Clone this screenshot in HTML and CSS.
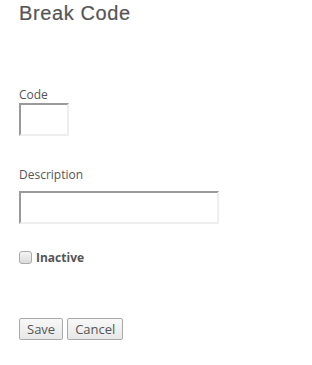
FILE: index.html
```
<!DOCTYPE html>
<html lang="en">
<head>
    <meta charset="UTF-8">
    <meta name="viewport" content="width=device-width, initial-scale=1.0">
    <title>Break Code</title>
    <link rel="stylesheet" href="styles.css">
</head>
<body>
    <div class="page">
        <h2 class="title">Break Code</h2>

        <div class="field field-code">
            <label class="field-label" for="code">Code</label>
            <input type="text" id="code" class="input input-code">
        </div>

        <div class="field field-desc">
            <label class="field-label" for="description">Description</label>
            <input type="text" id="description" class="input input-desc">
        </div>

        <div class="check-row">
            <input type="checkbox" id="inactive" class="check">
            <label for="inactive" class="check-label">Inactive</label>
        </div>

        <div class="button-row">
            <button class="btn">Save</button>
            <button class="btn">Cancel</button>
        </div>
    </div>
</body>
</html>
```

FILE: styles.css
```
* {
    margin: 0;
    padding: 0;
    box-sizing: border-box;
}

body {
    background-color: #fff;
    font-family: "Open Sans", sans-serif;
    font-size: 12px;
    color: #555;
}

.page {
    padding: 2px 19px;
}

.title {
    font-family: "Liberation Sans", Arial, sans-serif;
    font-size: 20px;
    font-weight: normal;
    letter-spacing: 0.6px;
    line-height: 22px;
    color: #555;
    -webkit-text-stroke: 0.2px #555;
}

.field {
    display: flex;
    flex-direction: column;
    align-items: flex-start;
}

.field-code {
    margin-top: 62px;
}

.field-desc {
    margin-top: 30px;
}

.field-label {
    line-height: 17px;
}

.field-desc .field-label {
    margin-bottom: 8px;
}

.input {
    border: 2px solid #999;
    border-right-color: #eee;
    border-bottom-color: #eee;
    background: #fff;
    font-family: "Open Sans", sans-serif;
    font-size: 12px;
    padding: 2px 4px;
    outline: none;
}

.input-code {
    width: 50px;
    height: 33px;
}

.input-desc {
    width: 200px;
    height: 33px;
}

.check-row {
    display: flex;
    align-items: center;
    gap: 4px;
    margin-top: 25px;
}

.check {
    appearance: none;
    width: 13px;
    height: 13px;
    margin: 0;
    border: 1px solid #aaa;
    border-radius: 3px;
    background: linear-gradient(#f4f4f4, #dcdcdc);
}

.check-label {
    font-weight: bold;
    line-height: 17px;
}

.button-row {
    display: flex;
    gap: 4px;
    margin-top: 52px;
}

.btn {
    font-family: "Open Sans", sans-serif;
    font-size: 13px;
    color: #555;
    height: 22px;
    padding: 0 7px;
    background: linear-gradient(#f8f8f8, #e8e8e8);
    border: 1px solid #aaa;
    border-radius: 2px;
}
```
